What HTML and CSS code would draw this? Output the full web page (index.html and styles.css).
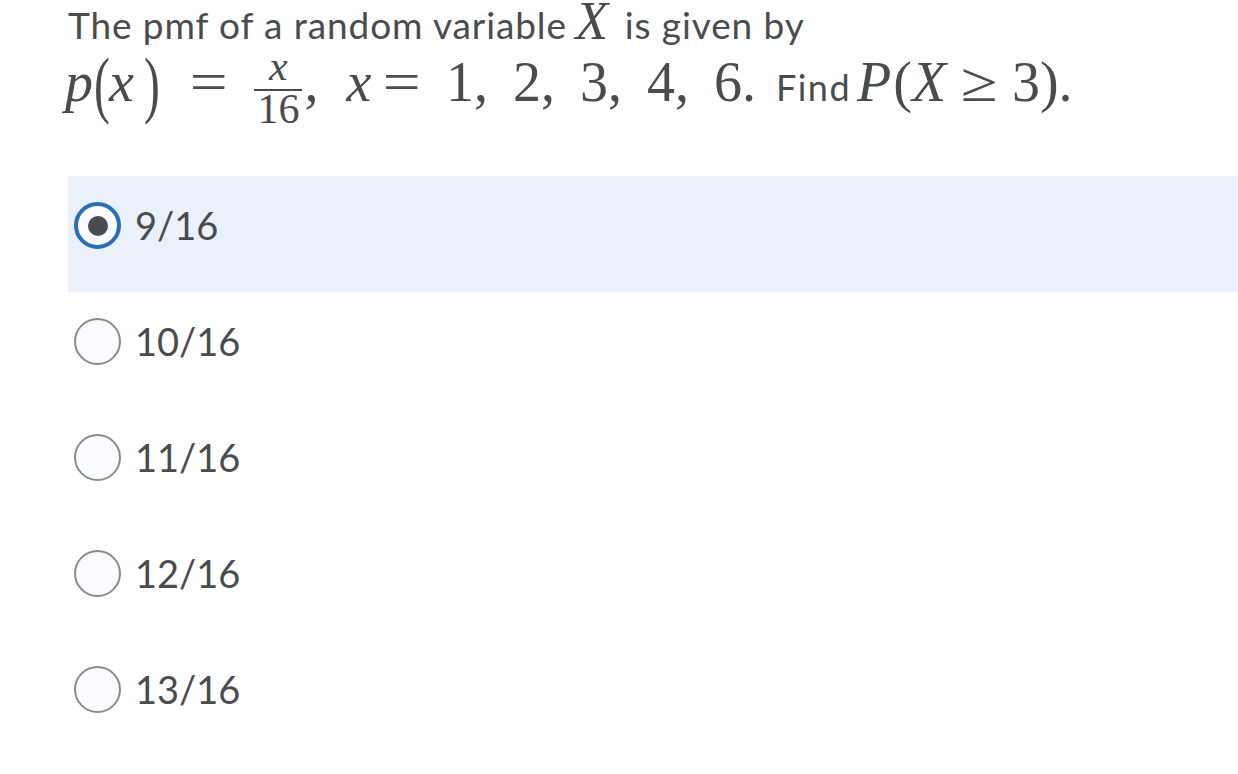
FILE: index.html
```html
<!DOCTYPE html>
<html>
<head>
<meta charset="utf-8">
<link rel="stylesheet" href="styles.css">
</head>
<body>
<div class="page">
  <div class="question">
    <div class="line1">The pmf of a random variable <span class="mi big">X</span> is given by</div>
    <div class="line2"><span class="math"><span class="mi p1">p</span><span class="paren">(</span><span class="mi">x</span><span class="paren pr">)</span><span class="rel eq1">=</span><span class="frac"><span class="num mi">x</span><span class="den">16</span></span><span class="comma">,</span><span class="mi xv">x</span><span class="rel eq2">=</span><span class="n">1,</span><span class="n">2,</span><span class="n">3,</span><span class="n">4,</span><span class="n last">6.</span></span><span class="find">Find</span><span class="math"><span class="mi">P</span><span class="pp">(</span><span class="mi">X</span><span class="rel ge">≥</span>3).</span></div>
  </div>
  <div class="options">
    <div class="option selected"><span class="radio"></span><span class="label">9/16</span></div>
    <div class="option"><span class="radio"></span><span class="label">10/16</span></div>
    <div class="option"><span class="radio"></span><span class="label">11/16</span></div>
    <div class="option"><span class="radio"></span><span class="label">12/16</span></div>
    <div class="option"><span class="radio"></span><span class="label">13/16</span></div>
  </div>
</div>
</body>
</html>
```
FILE: styles.css
```css
html, body {
  margin: 0;
  padding: 0;
  background: #ffffff;
}
body {
  font-family: Lato, "Open Sans", sans-serif;
  color: #494c4e;
  overflow: hidden;
}
.page {
  padding-left: 68px;
}
.question {
  height: 176px;
}
.line1 {
  font-size: 37px;
  letter-spacing: 0.9px;
  line-height: 50px;
  height: 50px;
  white-space: nowrap;
}
.line1 .big {
  font-size: 54px;
  line-height: 20px;
  letter-spacing: 0;
  margin: 0 6px 0 -2px;
}
.mi {
  font-family: "Liberation Serif", "Times New Roman", serif;
  font-style: italic;
}
.line2 {
  white-space: nowrap;
  height: 76px;
  line-height: 76px;
  margin-top: -7px;
  font-size: 36px;
}
.math {
  font-family: "Liberation Serif", "Times New Roman", serif;
  font-size: 56px;
  line-height: 1;
}
.p1 {
  margin-left: -3px;
}
.paren {
  display: inline-block;
  font-size: 66px;
  line-height: 0;
  transform: translateY(5px) scale(0.72, 1.12);
  margin: 0 -4px 0 -2px;
}
.pr {
  margin: 0 -4px 0 7px;
}
.rel {
  display: inline-block;
  transform: scaleX(1.2);
}
.eq1 {
  margin: 0 30px 0 34px;
}
.eq2 {
  margin: 0 28px 0 15px;
}
.pp {
  margin-left: 2px;
}
.ge {
  margin: 0 17px 0 18px;
}
.frac {
  display: inline-flex;
  flex-direction: column;
  align-items: center;
  vertical-align: 21px;
  font-size: 42px;
}
.frac .num {
  width: 48px;
  text-align: center;
  border-bottom: 2px solid #494c4e;
  line-height: 46px;
}
.frac .den {
  line-height: 36px;
}
.comma {
  margin-left: 2px;
  margin-right: 28px;
}
.n {
  margin-right: 25px;
}
.n.last {
  margin-right: 20px;
}
.find {
  font-family: Lato, sans-serif;
  font-size: 36px;
  letter-spacing: 1.5px;
  margin-right: 6px;
}
.options {
  display: flex;
  flex-direction: column;
}
.option {
  height: 116px;
  box-sizing: border-box;
  padding-top: 26px;
  padding-left: 6px;
  display: flex;
  align-items: flex-start;
}
.option.selected {
  background: #eaf1fb;
}
.radio {
  width: 47px;
  height: 47px;
  box-sizing: border-box;
  border-radius: 50%;
  border: 2px solid #868b8e;
  background: #f9fbff;
  display: flex;
  align-items: center;
  justify-content: center;
  flex-shrink: 0;
}
.selected .radio {
  border: 4px solid #2a6ebb;
}
.selected .radio::after {
  content: "";
  width: 20px;
  height: 20px;
  border-radius: 50%;
  background: #494c4e;
}
.label {
  font-size: 38px;
  line-height: 47px;
  margin-left: 14px;
}
```
